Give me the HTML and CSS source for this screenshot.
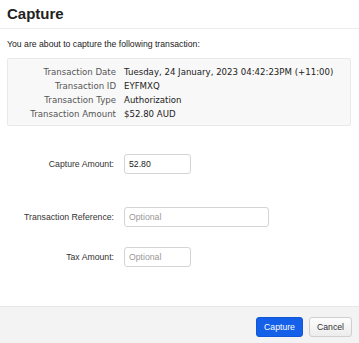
FILE: index.html
```html
<!DOCTYPE html>
<html>
<head>
<meta charset="utf-8">
<link rel="stylesheet" href="styles.css">
</head>
<body>
<div class="modal">
  <div class="header"><h1 class="title">Capture</h1></div>
  <div class="body">
    <p class="intro">You are about to capture the following transaction:</p>
    <div class="summary">
      <div class="srow"><span class="sl">Transaction Date</span><span class="sv">Tuesday, 24 January, 2023 04:42:23PM (+11:00)</span></div>
      <div class="srow"><span class="sl">Transaction ID</span><span class="sv">EYFMXQ</span></div>
      <div class="srow"><span class="sl">Transaction Type</span><span class="sv">Authorization</span></div>
      <div class="srow"><span class="sl">Transaction Amount</span><span class="sv">$52.80 AUD</span></div>
    </div>
    <div class="form">
      <div class="frow r1"><label class="fl">Capture Amount:</label><input class="inp short" type="text" value="52.80"></div>
      <div class="frow r2"><label class="fl">Transaction Reference:</label><input class="inp long" type="text" placeholder="Optional"></div>
      <div class="frow r3"><label class="fl">Tax Amount:</label><input class="inp short" type="text" placeholder="Optional"></div>
    </div>
  </div>
  <div class="footer">
    <button class="btn primary">Capture</button>
    <button class="btn cancel">Cancel</button>
  </div>
</div>
</body>
</html>
```
FILE: styles.css
```css
html, body { margin: 0; padding: 0; background: #fff; }
body { font-family: "Liberation Sans", Arial, sans-serif; color: #222; width: 359px; height: 343px; overflow: hidden; }
.modal { display: flex; flex-direction: column; height: 343px; }
.header { height: 28px; border-bottom: 1px solid #ececec; padding: 0 7px; }
.title { margin: 0; font-size: 15px; font-weight: bold; line-height: 27px; color: #222; }
.body { flex: 1; padding: 0 7px; }
.intro { margin: 9px 0 0; font-size: 8.7px; line-height: 13px; color: #222; }
.summary { margin-top: 7px; width: 344px; height: 68px; box-sizing: border-box; background: #f8f8f8; border: 1px solid #e9e9e9; border-radius: 2px; padding: 6px 0 0; font-family: "DejaVu Sans", Verdana, sans-serif; font-size: 8.6px; }
.srow { display: flex; height: 14px; line-height: 14px; }
.sl { width: 108px; text-align: right; color: #555; flex: none; white-space: nowrap; }
.sv { margin-left: 8px; color: #222; white-space: nowrap; }
.form { margin-top: 28px; }
.frow { display: flex; align-items: center; }
.fl { width: 107px; text-align: right; font-size: 8.7px; color: #333; flex: none; white-space: nowrap; }
.r2 { margin-top: 33px; }
.r3 { margin-top: 20px; }
.inp { margin-left: 10px; height: 20px; box-sizing: border-box; border: 1px solid #d4d4d4; border-radius: 3px; padding: 0 4px; font-family: "Liberation Sans", Arial, sans-serif; font-size: 8.7px; color: #222; outline: none; }
.inp::placeholder { color: #999; }
.short { width: 67px; }
.long { width: 145px; }
.footer { height: 36px; box-sizing: content-box; flex: none; background: #f3f3f3; border-top: 1px solid #e6e6e6; display: flex; justify-content: flex-end; align-items: flex-start; padding: 0 7px 0; gap: 6px; }
.btn { margin-top: 10px; height: 20px; box-sizing: border-box; border: 1px solid #cfcfcf; border-radius: 3px; background: linear-gradient(#fdfdfd, #ececec); font-family: "Liberation Sans", Arial, sans-serif; font-size: 8.7px; color: #333; padding: 0; }
.primary { background: #1560e8; border-color: #1257d6; color: #fff; width: 47px; }
.cancel { width: 43px; }
```
